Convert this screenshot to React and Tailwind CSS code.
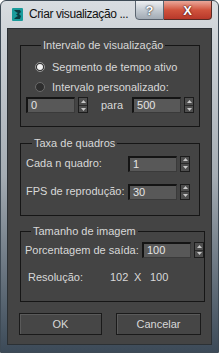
import React from 'react';

const Spinner = () => (
    <div className="flex flex-col w-[10px] h-[16px] border border-[#1c1c1c] bg-[#4e4e4e]">
        <div className="flex-1 flex items-center justify-center border-b border-[#2a2a2a]">
            <svg width="5" height="3" viewBox="0 0 5 3"><path d="M0 3 L2.5 0 L5 3 Z" fill="#c8c8c8" /></svg>
        </div>
        <div className="flex-1 flex items-center justify-center">
            <svg width="5" height="3" viewBox="0 0 5 3"><path d="M0 0 L2.5 3 L5 0 Z" fill="#c8c8c8" /></svg>
        </div>
    </div>
);

const NumInput = ({ value }) => (
    <div className="w-[49px] h-[16px] bg-[#585858] border-t-2 border-l-2 border-[#141414] border-r border-b border-r-[#3a3a3a] border-b-[#3a3a3a] pl-[3px] leading-[12px] text-[#e4e4e4]">
        {value}
    </div>
);

const Radio = ({ checked }) => (
    <div className={`w-[10px] h-[10px] rounded-full border ${checked ? 'border-[#9a9a9a] bg-[#2a2a2a]' : 'border-[#6a6a6a] bg-[#2e2e2e]'} flex items-center justify-center`}>
        {checked && <div className="w-[6px] h-[6px] rounded-full bg-[#f0f0f0]" />}
    </div>
);

const Group = ({ title, className, children }) => (
    <fieldset className={`border border-[#161616] ${className}`}>
        <legend className="ml-[6px] px-[2px] leading-[14px]">{title}</legend>
        {children}
    </fieldset>
);

export default function App() {
    return (
        <div className="w-[219px] h-[353px] flex flex-col bg-linear-to-b from-[#d9dde1] via-[#a4acb3] to-[#3c4a58] rounded-t-[6px] border border-[#3e4a55] overflow-hidden" style={{ fontFamily: '"Liberation Sans", Arial, sans-serif' }}>
            {/* title bar */}
            <div className="h-[27px] flex items-start shrink-0">
                <div className="flex items-center h-[26px] pl-[11px] whitespace-nowrap">
                    <svg width="11" height="13" viewBox="0 0 11 13">
                        <rect x="0" y="0" width="11" height="13" rx="1" fill="#1a9b9b" />
                        <path d="M2 2 L8 2 L9 4 L7 6 L9 8 L8 11 L2 11 L4 9 L6 8 L4 6.5 L6 5 L4 4 Z" fill="#0c3d42" />
                    </svg>
                    <span className="ml-[6px] text-[12px] tracking-[-0.4px] text-[#111]">Criar visualização ...</span>
                </div>
                <div className="ml-auto mr-[6px] flex -mt-px shrink-0">
                    <div className="w-[29px] h-[20px] rounded-bl-[4px] border border-[#5b6570] bg-linear-to-b from-[#eef0f2] via-[#c4cbd2] to-[#a2abb4] flex items-center justify-center">
                        <span className="text-white font-bold text-[13px] leading-none" style={{ textShadow: '0 0 2px #333, 0 0 1px #333' }}>?</span>
                    </div>
                    <div className="w-[48px] h-[20px] rounded-br-[4px] border border-l-0 border-[#5a2a24] bg-linear-to-b from-[#e9a79a] via-[#d0533d] to-[#b8382a] flex items-center justify-center">
                        <span className="text-white font-bold text-[13px] leading-none" style={{ textShadow: '0 0 2px #4a1010, 0 0 1px #4a1010' }}>X</span>
                    </div>
                </div>
            </div>
            {/* client */}
            <div className="mx-[6px] mb-[7px] flex-1 bg-[#444444] border border-[#2b3034] text-[11px] text-[#d8d8d8] pt-[9px] pl-[12px] flex flex-col">
                <Group title="Intervalo de visualização" className="w-[180px] h-[89px] pl-[14px]">
                    <div className="flex items-center gap-[7px] h-[20px] mt-[5px]">
                        <Radio checked />
                        <span>Segmento de tempo ativo</span>
                    </div>
                    <div className="flex items-center gap-[7px] h-[20px]">
                        <Radio />
                        <span>Intervalo personalizado:</span>
                    </div>
                    <div className="flex items-center -ml-[9px]">
                        <NumInput value="0" />
                        <div className="ml-[3px]"><Spinner /></div>
                        <span className="ml-[13px]">para</span>
                        <div className="ml-[9px]"><NumInput value="500" /></div>
                        <div className="ml-[3px]"><Spinner /></div>
                    </div>
                </Group>
                <Group title="Taxa de quadros" className="w-[180px] h-[80px] mt-[9px] pl-[5px]">
                    <div className="flex items-center h-[17px] mt-[5px]">
                        <span className="w-[102px]">Cada n quadro:</span>
                        <NumInput value="1" />
                        <div className="ml-[3px]"><Spinner /></div>
                    </div>
                    <div className="flex items-center h-[17px] mt-[11px]">
                        <span className="w-[102px]">FPS de reprodução:</span>
                        <NumInput value="30" />
                        <div className="ml-[3px]"><Spinner /></div>
                    </div>
                </Group>
                <Group title="Tamanho de imagem" className="w-[184px] h-[78px] mt-[8px] pl-[4px]">
                    <div className="flex items-center h-[16px] mt-[4px]">
                        <span className="w-[117px]">Porcentagem de saída:</span>
                        <NumInput value="100" />
                        <div className="ml-[3px]"><Spinner /></div>
                    </div>
                    <div className="flex items-center h-[16px] mt-[11px] pl-[3px]">
                        <span className="w-[82px]">Resolução:</span>
                        <span className="w-[24px]">102</span>
                        <span className="w-[16px]">X</span>
                        <span>100</span>
                    </div>
                </Group>
                <div className="flex mt-[11px] gap-[14px] -ml-[1px]">
                    <button className="w-[83px] h-[22px] bg-[#464646] border border-[#1a1a1a] shadow-[inset_1px_1px_0_#5a5a5a] text-[#d8d8d8]">OK</button>
                    <button className="w-[85px] h-[22px] bg-[#464646] border border-[#1a1a1a] shadow-[inset_1px_1px_0_#5a5a5a] text-[#d8d8d8]">Cancelar</button>
                </div>
            </div>
        </div>
    );
}
